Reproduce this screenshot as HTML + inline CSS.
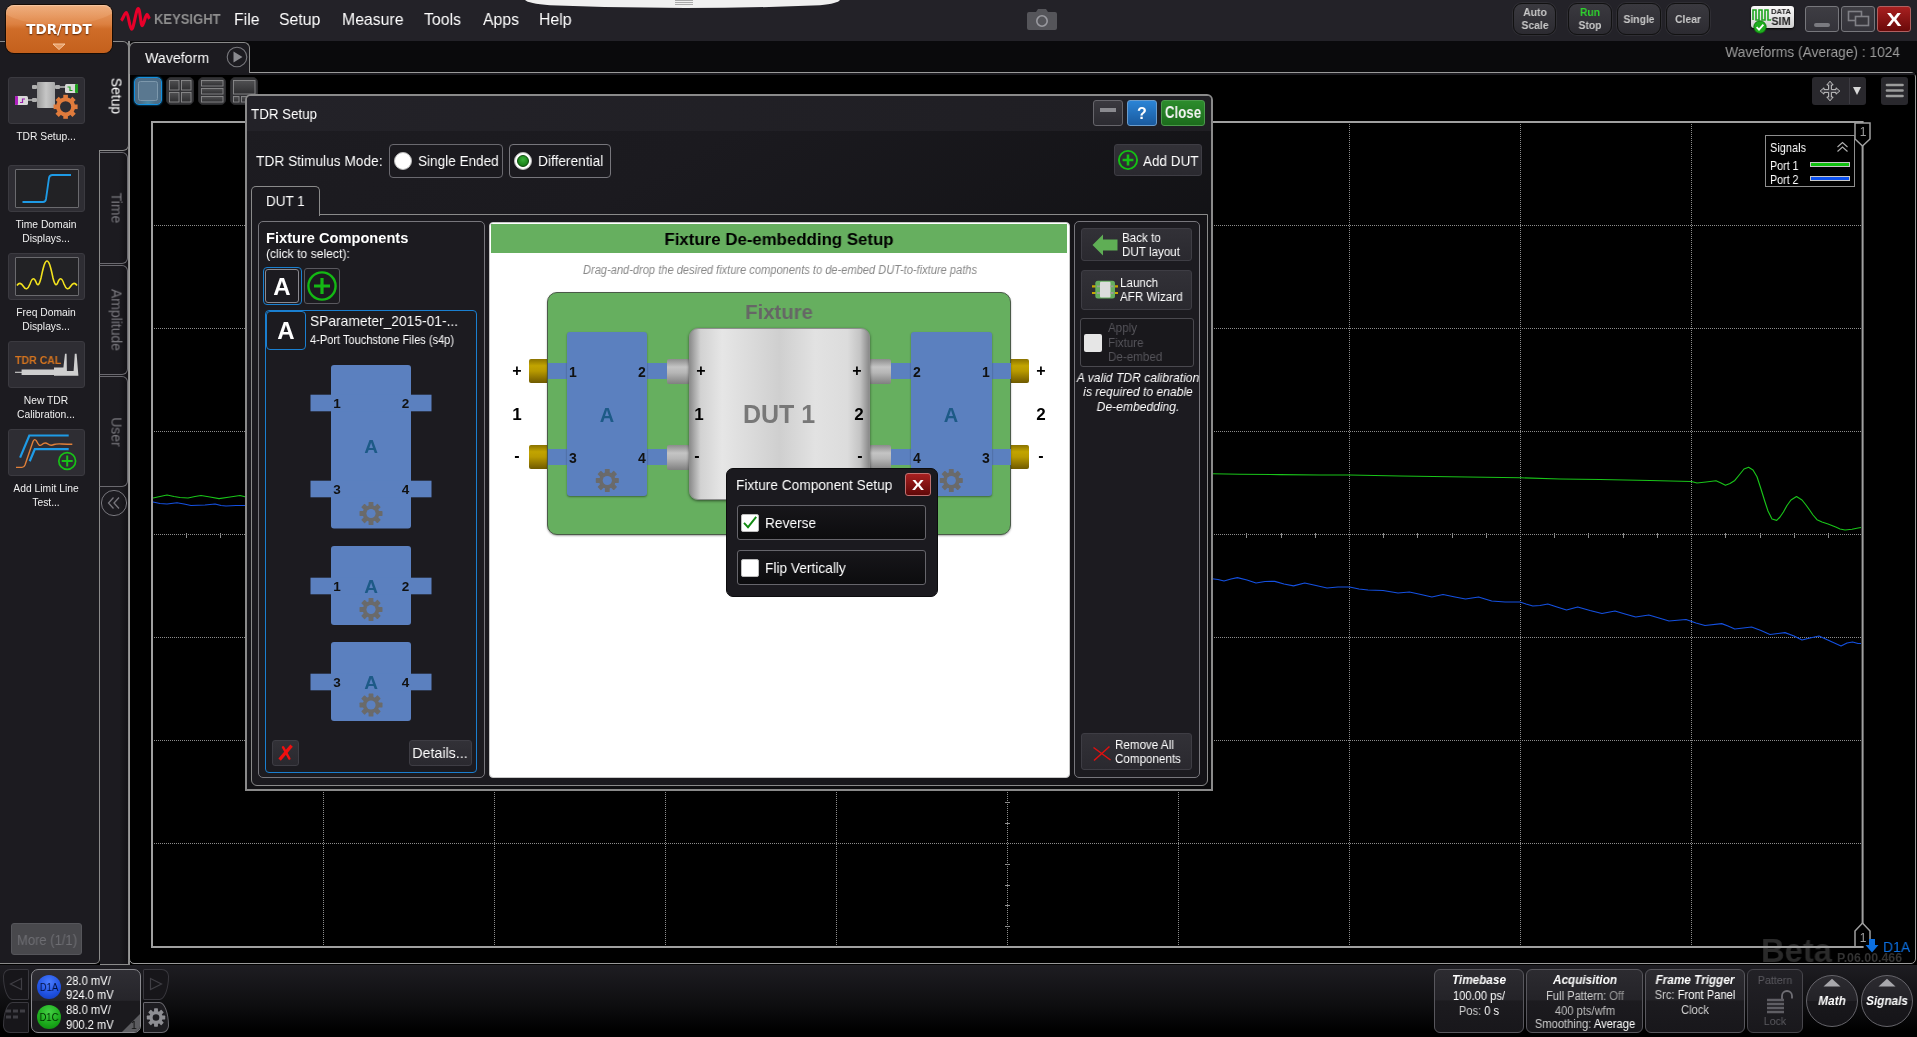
<!DOCTYPE html>
<html><head><meta charset="utf-8"><title>TDR Setup</title>
<style>
html,body{margin:0;padding:0;}
body{width:1917px;height:1037px;overflow:hidden;background:#000;position:relative;font-family:"Liberation Sans", sans-serif;}
div{box-sizing:border-box;}
.t{position:absolute;white-space:nowrap;will-change:transform;}
svg{position:absolute;overflow:visible;}
.btn{background:linear-gradient(#323137,#2a292f);border:1px solid #3e3d44;border-radius:3px;}
</style></head><body>
<div style="position:absolute;left:0px;top:0px;width:1917px;height:41px;background:#232228;"></div>
<div style="position:absolute;left:128px;top:41px;width:1789px;height:32px;background:#0a0a0c;"></div>
<div style="position:absolute;left:0px;top:41px;width:100px;height:923px;background:#1c1b20;border-right:1px solid #8a8a8a;border-top:1px solid #8a8a8a;border-bottom:1px solid #8a8a8a;border-bottom-right-radius:5px;"></div>
<div style="position:absolute;left:100px;top:41px;width:30px;height:924px;background:linear-gradient(90deg,#1c1b20 70%,#121115);border-right:2px solid #8a8a8a;border-bottom:1px solid #8a8a8a;"></div>
<div style="position:absolute;left:99px;top:41px;width:30px;height:110px;background:#1c1b20;border-right:1px solid #8a8a8a;border-top:1px solid #8a8a8a;border-bottom:1px solid #8a8a8a;border-left:0;border-radius:0 6px 6px 0;"></div>
<div style="position:absolute;left:99px;top:152px;width:29px;height:112px;background:linear-gradient(90deg,#1c1b20 70%,#131216);border:1px solid #6a696f;border-left:1px solid #8a8a8a;border-radius:0 6px 6px 0;"></div>
<div style="position:absolute;left:99px;top:265px;width:29px;height:110px;background:linear-gradient(90deg,#1c1b20 70%,#131216);border:1px solid #6a696f;border-left:1px solid #8a8a8a;border-radius:0 6px 6px 0;"></div>
<div style="position:absolute;left:99px;top:376px;width:29px;height:111px;background:linear-gradient(90deg,#1c1b20 70%,#131216);border:1px solid #6a696f;border-left:1px solid #8a8a8a;border-radius:0 6px 6px 0;"></div>
<div style="position:absolute;left:129px;top:72px;width:1786.5px;height:892px;background:#000;border:1px solid #9a9a9a;border-radius:0 5px 5px 5px;"></div>
<div style="position:absolute;left:129px;top:42px;width:121px;height:32px;background:#1c1b20;border:1px solid #8a8a8a;border-bottom:0;border-radius:6px 6px 0 0;"></div>
<div style="position:absolute;left:130px;top:72px;width:119px;height:2px;background:#1c1b20;"></div>
<div style="position:absolute;left:130px;top:73px;width:1785px;height:2px;background:#1b1a1f;"></div>
<div style="position:absolute;left:0px;top:965px;width:1917px;height:72px;background:linear-gradient(#1e1d22,#0e0e10 55%,#000 92%);"></div>
<div class="t" style="top:933.5px;font-size:33px;line-height:33px;color:#2a2a2a;transform-origin:0 50%;transform:scaleX(0.99);left:1761px;font-weight:bold;">Beta</div>
<div class="t" style="top:951.5px;font-size:12px;line-height:12px;color:#333;transform-origin:0 50%;transform:scaleX(1.03);left:1837px;font-weight:bold;">P.06.00.466</div>
<svg style="left:0;top:0" width="1917" height="1037" viewBox="0 0 1917 1037">
<line x1="323.1" y1="122" x2="323.1" y2="947" stroke="#8c8c8c" stroke-width="1" stroke-dasharray="1 1" shape-rendering="crispEdges"/>
<line x1="494.1" y1="122" x2="494.1" y2="947" stroke="#8c8c8c" stroke-width="1" stroke-dasharray="1 1" shape-rendering="crispEdges"/>
<line x1="665.2" y1="122" x2="665.2" y2="947" stroke="#8c8c8c" stroke-width="1" stroke-dasharray="1 1" shape-rendering="crispEdges"/>
<line x1="836.2" y1="122" x2="836.2" y2="947" stroke="#8c8c8c" stroke-width="1" stroke-dasharray="1 1" shape-rendering="crispEdges"/>
<line x1="1007.3" y1="122" x2="1007.3" y2="947" stroke="#8c8c8c" stroke-width="1" stroke-dasharray="1 1" shape-rendering="crispEdges"/>
<line x1="1178.4" y1="122" x2="1178.4" y2="947" stroke="#8c8c8c" stroke-width="1" stroke-dasharray="1 1" shape-rendering="crispEdges"/>
<line x1="1349.4" y1="122" x2="1349.4" y2="947" stroke="#8c8c8c" stroke-width="1" stroke-dasharray="1 1" shape-rendering="crispEdges"/>
<line x1="1520.5" y1="122" x2="1520.5" y2="947" stroke="#8c8c8c" stroke-width="1" stroke-dasharray="1 1" shape-rendering="crispEdges"/>
<line x1="1691.5" y1="122" x2="1691.5" y2="947" stroke="#8c8c8c" stroke-width="1" stroke-dasharray="1 1" shape-rendering="crispEdges"/>
<line x1="152" y1="225.1" x2="1862.6" y2="225.1" stroke="#8c8c8c" stroke-width="1" stroke-dasharray="1 1" shape-rendering="crispEdges"/>
<line x1="152" y1="328.2" x2="1862.6" y2="328.2" stroke="#8c8c8c" stroke-width="1" stroke-dasharray="1 1" shape-rendering="crispEdges"/>
<line x1="152" y1="431.4" x2="1862.6" y2="431.4" stroke="#8c8c8c" stroke-width="1" stroke-dasharray="1 1" shape-rendering="crispEdges"/>
<line x1="152" y1="534.5" x2="1862.6" y2="534.5" stroke="#8c8c8c" stroke-width="1" stroke-dasharray="1 1" shape-rendering="crispEdges"/>
<line x1="152" y1="637.6" x2="1862.6" y2="637.6" stroke="#8c8c8c" stroke-width="1" stroke-dasharray="1 1" shape-rendering="crispEdges"/>
<line x1="152" y1="740.8" x2="1862.6" y2="740.8" stroke="#8c8c8c" stroke-width="1" stroke-dasharray="1 1" shape-rendering="crispEdges"/>
<line x1="152" y1="843.9" x2="1862.6" y2="843.9" stroke="#8c8c8c" stroke-width="1" stroke-dasharray="1 1" shape-rendering="crispEdges"/>
<line x1="186.2" y1="532.5" x2="186.2" y2="537.5" stroke="#8c8c8c" stroke-width="1" shape-rendering="crispEdges"/>
<line x1="220.4" y1="532.5" x2="220.4" y2="537.5" stroke="#8c8c8c" stroke-width="1" shape-rendering="crispEdges"/>
<line x1="254.6" y1="532.5" x2="254.6" y2="537.5" stroke="#8c8c8c" stroke-width="1" shape-rendering="crispEdges"/>
<line x1="288.8" y1="532.5" x2="288.8" y2="537.5" stroke="#8c8c8c" stroke-width="1" shape-rendering="crispEdges"/>
<line x1="357.3" y1="532.5" x2="357.3" y2="537.5" stroke="#8c8c8c" stroke-width="1" shape-rendering="crispEdges"/>
<line x1="391.5" y1="532.5" x2="391.5" y2="537.5" stroke="#8c8c8c" stroke-width="1" shape-rendering="crispEdges"/>
<line x1="425.7" y1="532.5" x2="425.7" y2="537.5" stroke="#8c8c8c" stroke-width="1" shape-rendering="crispEdges"/>
<line x1="459.9" y1="532.5" x2="459.9" y2="537.5" stroke="#8c8c8c" stroke-width="1" shape-rendering="crispEdges"/>
<line x1="528.3" y1="532.5" x2="528.3" y2="537.5" stroke="#8c8c8c" stroke-width="1" shape-rendering="crispEdges"/>
<line x1="562.5" y1="532.5" x2="562.5" y2="537.5" stroke="#8c8c8c" stroke-width="1" shape-rendering="crispEdges"/>
<line x1="596.8" y1="532.5" x2="596.8" y2="537.5" stroke="#8c8c8c" stroke-width="1" shape-rendering="crispEdges"/>
<line x1="631.0" y1="532.5" x2="631.0" y2="537.5" stroke="#8c8c8c" stroke-width="1" shape-rendering="crispEdges"/>
<line x1="699.4" y1="532.5" x2="699.4" y2="537.5" stroke="#8c8c8c" stroke-width="1" shape-rendering="crispEdges"/>
<line x1="733.6" y1="532.5" x2="733.6" y2="537.5" stroke="#8c8c8c" stroke-width="1" shape-rendering="crispEdges"/>
<line x1="767.8" y1="532.5" x2="767.8" y2="537.5" stroke="#8c8c8c" stroke-width="1" shape-rendering="crispEdges"/>
<line x1="802.0" y1="532.5" x2="802.0" y2="537.5" stroke="#8c8c8c" stroke-width="1" shape-rendering="crispEdges"/>
<line x1="870.5" y1="532.5" x2="870.5" y2="537.5" stroke="#8c8c8c" stroke-width="1" shape-rendering="crispEdges"/>
<line x1="904.7" y1="532.5" x2="904.7" y2="537.5" stroke="#8c8c8c" stroke-width="1" shape-rendering="crispEdges"/>
<line x1="938.9" y1="532.5" x2="938.9" y2="537.5" stroke="#8c8c8c" stroke-width="1" shape-rendering="crispEdges"/>
<line x1="973.1" y1="532.5" x2="973.1" y2="537.5" stroke="#8c8c8c" stroke-width="1" shape-rendering="crispEdges"/>
<line x1="1041.5" y1="532.5" x2="1041.5" y2="537.5" stroke="#8c8c8c" stroke-width="1" shape-rendering="crispEdges"/>
<line x1="1075.7" y1="532.5" x2="1075.7" y2="537.5" stroke="#8c8c8c" stroke-width="1" shape-rendering="crispEdges"/>
<line x1="1109.9" y1="532.5" x2="1109.9" y2="537.5" stroke="#8c8c8c" stroke-width="1" shape-rendering="crispEdges"/>
<line x1="1144.1" y1="532.5" x2="1144.1" y2="537.5" stroke="#8c8c8c" stroke-width="1" shape-rendering="crispEdges"/>
<line x1="1212.6" y1="532.5" x2="1212.6" y2="537.5" stroke="#8c8c8c" stroke-width="1" shape-rendering="crispEdges"/>
<line x1="1246.8" y1="532.5" x2="1246.8" y2="537.5" stroke="#8c8c8c" stroke-width="1" shape-rendering="crispEdges"/>
<line x1="1281.0" y1="532.5" x2="1281.0" y2="537.5" stroke="#8c8c8c" stroke-width="1" shape-rendering="crispEdges"/>
<line x1="1315.2" y1="532.5" x2="1315.2" y2="537.5" stroke="#8c8c8c" stroke-width="1" shape-rendering="crispEdges"/>
<line x1="1383.6" y1="532.5" x2="1383.6" y2="537.5" stroke="#8c8c8c" stroke-width="1" shape-rendering="crispEdges"/>
<line x1="1417.8" y1="532.5" x2="1417.8" y2="537.5" stroke="#8c8c8c" stroke-width="1" shape-rendering="crispEdges"/>
<line x1="1452.1" y1="532.5" x2="1452.1" y2="537.5" stroke="#8c8c8c" stroke-width="1" shape-rendering="crispEdges"/>
<line x1="1486.3" y1="532.5" x2="1486.3" y2="537.5" stroke="#8c8c8c" stroke-width="1" shape-rendering="crispEdges"/>
<line x1="1554.7" y1="532.5" x2="1554.7" y2="537.5" stroke="#8c8c8c" stroke-width="1" shape-rendering="crispEdges"/>
<line x1="1588.9" y1="532.5" x2="1588.9" y2="537.5" stroke="#8c8c8c" stroke-width="1" shape-rendering="crispEdges"/>
<line x1="1623.1" y1="532.5" x2="1623.1" y2="537.5" stroke="#8c8c8c" stroke-width="1" shape-rendering="crispEdges"/>
<line x1="1657.3" y1="532.5" x2="1657.3" y2="537.5" stroke="#8c8c8c" stroke-width="1" shape-rendering="crispEdges"/>
<line x1="1725.8" y1="532.5" x2="1725.8" y2="537.5" stroke="#8c8c8c" stroke-width="1" shape-rendering="crispEdges"/>
<line x1="1760.0" y1="532.5" x2="1760.0" y2="537.5" stroke="#8c8c8c" stroke-width="1" shape-rendering="crispEdges"/>
<line x1="1794.2" y1="532.5" x2="1794.2" y2="537.5" stroke="#8c8c8c" stroke-width="1" shape-rendering="crispEdges"/>
<line x1="1828.4" y1="532.5" x2="1828.4" y2="537.5" stroke="#8c8c8c" stroke-width="1" shape-rendering="crispEdges"/>
<line x1="1005.3" y1="142.6" x2="1010.3" y2="142.6" stroke="#8c8c8c" stroke-width="1" shape-rendering="crispEdges"/>
<line x1="1005.3" y1="163.2" x2="1010.3" y2="163.2" stroke="#8c8c8c" stroke-width="1" shape-rendering="crispEdges"/>
<line x1="1005.3" y1="183.9" x2="1010.3" y2="183.9" stroke="#8c8c8c" stroke-width="1" shape-rendering="crispEdges"/>
<line x1="1005.3" y1="204.5" x2="1010.3" y2="204.5" stroke="#8c8c8c" stroke-width="1" shape-rendering="crispEdges"/>
<line x1="1005.3" y1="245.8" x2="1010.3" y2="245.8" stroke="#8c8c8c" stroke-width="1" shape-rendering="crispEdges"/>
<line x1="1005.3" y1="266.4" x2="1010.3" y2="266.4" stroke="#8c8c8c" stroke-width="1" shape-rendering="crispEdges"/>
<line x1="1005.3" y1="287.0" x2="1010.3" y2="287.0" stroke="#8c8c8c" stroke-width="1" shape-rendering="crispEdges"/>
<line x1="1005.3" y1="307.6" x2="1010.3" y2="307.6" stroke="#8c8c8c" stroke-width="1" shape-rendering="crispEdges"/>
<line x1="1005.3" y1="348.9" x2="1010.3" y2="348.9" stroke="#8c8c8c" stroke-width="1" shape-rendering="crispEdges"/>
<line x1="1005.3" y1="369.5" x2="1010.3" y2="369.5" stroke="#8c8c8c" stroke-width="1" shape-rendering="crispEdges"/>
<line x1="1005.3" y1="390.1" x2="1010.3" y2="390.1" stroke="#8c8c8c" stroke-width="1" shape-rendering="crispEdges"/>
<line x1="1005.3" y1="410.8" x2="1010.3" y2="410.8" stroke="#8c8c8c" stroke-width="1" shape-rendering="crispEdges"/>
<line x1="1005.3" y1="452.0" x2="1010.3" y2="452.0" stroke="#8c8c8c" stroke-width="1" shape-rendering="crispEdges"/>
<line x1="1005.3" y1="472.6" x2="1010.3" y2="472.6" stroke="#8c8c8c" stroke-width="1" shape-rendering="crispEdges"/>
<line x1="1005.3" y1="493.2" x2="1010.3" y2="493.2" stroke="#8c8c8c" stroke-width="1" shape-rendering="crispEdges"/>
<line x1="1005.3" y1="513.9" x2="1010.3" y2="513.9" stroke="#8c8c8c" stroke-width="1" shape-rendering="crispEdges"/>
<line x1="1005.3" y1="555.1" x2="1010.3" y2="555.1" stroke="#8c8c8c" stroke-width="1" shape-rendering="crispEdges"/>
<line x1="1005.3" y1="575.8" x2="1010.3" y2="575.8" stroke="#8c8c8c" stroke-width="1" shape-rendering="crispEdges"/>
<line x1="1005.3" y1="596.4" x2="1010.3" y2="596.4" stroke="#8c8c8c" stroke-width="1" shape-rendering="crispEdges"/>
<line x1="1005.3" y1="617.0" x2="1010.3" y2="617.0" stroke="#8c8c8c" stroke-width="1" shape-rendering="crispEdges"/>
<line x1="1005.3" y1="658.2" x2="1010.3" y2="658.2" stroke="#8c8c8c" stroke-width="1" shape-rendering="crispEdges"/>
<line x1="1005.3" y1="678.9" x2="1010.3" y2="678.9" stroke="#8c8c8c" stroke-width="1" shape-rendering="crispEdges"/>
<line x1="1005.3" y1="699.5" x2="1010.3" y2="699.5" stroke="#8c8c8c" stroke-width="1" shape-rendering="crispEdges"/>
<line x1="1005.3" y1="720.1" x2="1010.3" y2="720.1" stroke="#8c8c8c" stroke-width="1" shape-rendering="crispEdges"/>
<line x1="1005.3" y1="761.4" x2="1010.3" y2="761.4" stroke="#8c8c8c" stroke-width="1" shape-rendering="crispEdges"/>
<line x1="1005.3" y1="782.0" x2="1010.3" y2="782.0" stroke="#8c8c8c" stroke-width="1" shape-rendering="crispEdges"/>
<line x1="1005.3" y1="802.6" x2="1010.3" y2="802.6" stroke="#8c8c8c" stroke-width="1" shape-rendering="crispEdges"/>
<line x1="1005.3" y1="823.2" x2="1010.3" y2="823.2" stroke="#8c8c8c" stroke-width="1" shape-rendering="crispEdges"/>
<line x1="1005.3" y1="864.5" x2="1010.3" y2="864.5" stroke="#8c8c8c" stroke-width="1" shape-rendering="crispEdges"/>
<line x1="1005.3" y1="885.1" x2="1010.3" y2="885.1" stroke="#8c8c8c" stroke-width="1" shape-rendering="crispEdges"/>
<line x1="1005.3" y1="905.8" x2="1010.3" y2="905.8" stroke="#8c8c8c" stroke-width="1" shape-rendering="crispEdges"/>
<line x1="1005.3" y1="926.4" x2="1010.3" y2="926.4" stroke="#8c8c8c" stroke-width="1" shape-rendering="crispEdges"/>
<rect x="152" y="122" width="1710.6" height="825" fill="none" stroke="#a0a0a0" stroke-width="2"/>
<polyline points="153.0,498.0 160.0,496.5 167.0,495.0 174.0,496.5 180.0,497.5 188.0,498.0 195.0,496.5 201.0,495.5 210.0,497.0 219.0,498.6 230.0,497.0 240.0,495.5 246.0,497.0" fill="none" stroke="#19c419" stroke-width="1.15" stroke-linejoin="round"/>
<polyline points="153.0,502.0 160.0,503.5 167.0,504.0 177.0,502.8 184.0,504.0 191.0,505.5 205.0,505.0 215.0,504.0 221.0,505.5 226.0,506.0 236.0,505.5 246.0,505.5" fill="none" stroke="#1450e0" stroke-width="1.15" stroke-linejoin="round"/>
<polyline points="1212.0,473.7 1240.0,474.3 1280.0,474.6 1320.0,475.0 1349.6,475.0 1400.0,476.0 1450.0,476.8 1520.5,477.8 1560.0,479.0 1600.0,479.5 1650.0,480.5 1691.4,481.5 1697.0,483.0 1706.0,482.0 1716.0,480.8 1721.0,483.0 1725.4,485.3 1730.0,483.5 1734.8,480.4 1740.0,474.0 1744.0,469.0 1748.6,467.3 1753.0,470.0 1757.0,476.7 1761.0,489.0 1764.7,501.0 1768.0,511.0 1772.0,519.0 1776.7,520.4 1780.0,517.0 1783.4,512.0 1787.0,505.5 1791.0,500.0 1796.5,496.5 1802.0,500.0 1806.0,505.0 1809.6,510.0 1813.0,515.0 1817.0,519.7 1822.0,522.0 1828.0,524.0 1835.7,527.0 1840.0,529.0 1845.0,530.0 1852.0,529.3 1858.0,528.0 1861.0,527.5" fill="none" stroke="#19c419" stroke-width="1.15" stroke-linejoin="round"/>
<polyline points="1212.0,578.8 1218.0,579.5 1224.0,581.0 1231.0,579.0 1237.4,577.6 1247.0,580.0 1256.0,583.0 1265.0,581.5 1274.8,581.4 1284.0,584.0 1293.5,585.9 1304.7,583.0 1316.0,585.5 1327.0,588.0 1338.0,587.0 1349.6,587.0 1359.0,589.0 1368.0,590.0 1383.0,590.5 1398.0,593.0 1409.4,592.0 1421.0,594.5 1431.9,597.0 1443.0,594.5 1455.0,597.0 1465.5,599.0 1478.6,597.0 1485.0,599.0 1491.7,601.0 1505.0,602.0 1520.0,602.0 1526.0,604.0 1532.8,606.0 1540.0,605.5 1547.8,604.0 1557.0,607.0 1566.5,610.0 1577.7,607.0 1590.0,610.5 1602.0,613.5 1615.0,611.0 1625.0,614.0 1635.7,617.0 1648.8,615.0 1659.0,618.0 1669.0,621.0 1686.0,619.5 1696.0,623.0 1705.0,625.5 1721.7,623.6 1728.0,626.0 1734.8,629.0 1751.6,627.0 1761.0,630.5 1770.0,634.5 1785.0,632.6 1794.0,636.0 1802.0,640.0 1810.0,638.0 1819.0,636.0 1830.0,641.0 1841.0,646.0 1847.0,643.0 1852.6,642.0 1858.0,643.5 1861.0,643.5" fill="none" stroke="#1450e0" stroke-width="1.15" stroke-linejoin="round"/>
<path d="M1855,123 L1870,123 L1870,139 L1862.5,146 L1855,139 Z" fill="#000" stroke="#a0a0a0" stroke-width="1.5"/>
<path d="M1855,946 L1855,931 L1862.5,923 L1870,931 L1870,946" fill="#000" stroke="#a0a0a0" stroke-width="1.5"/>
</svg>
<div class="t" style="top:126.0px;font-size:12px;line-height:12px;color:#a0a0a0;transform-origin:50% 50%;transform:translateX(-50%) scaleX(1);left:1862.5px;">1</div>
<div class="t" style="top:932.0px;font-size:12px;line-height:12px;color:#a0a0a0;transform-origin:50% 50%;transform:translateX(-50%) scaleX(1);left:1862.5px;">1</div>
<svg style="left:520px;top:0" width="330" height="10" viewBox="0 0 330 10"><path d="M5,0 L320,0 Q318,3.5 300,5.2 Q165,11 30,5.2 Q8,3.5 5,0 Z" fill="#f0f0f0"/><path d="M155,0.5h18M155,2.5h18M155,4.5h18" stroke="#aaa" stroke-width="1"/></svg>
<div style="position:absolute;left:6px;top:5px;width:106px;height:48px;background:linear-gradient(#e9a06c 0%,#dc8040 40%,#cf6c28 50%,#c4601c 100%);border-radius:8px;box-shadow:0 0 0 1px #160b03, inset 0 1px 1px rgba(255,225,200,.55);overflow:hidden;"><div style="position:absolute;left:-12px;top:-30px;width:128px;height:50px;border-radius:50%;background:linear-gradient(rgba(255,215,180,.55),rgba(255,190,140,.12));"></div></div>
<div class="t" style="top:23.4px;font-size:13.5px;line-height:13.5px;color:#fff;transform-origin:50% 50%;transform:translateX(-50%) scaleX(1.0);left:59px;font-weight:bold;font-family:&quot;DejaVu Sans&quot;,&quot;Liberation Sans&quot;,sans-serif;text-shadow:0 1px 1.5px rgba(80,30,0,.9);">TDR/TDT</div>
<svg style="left:52px;top:43px" width="14" height="8" viewBox="0 0 14 8"><path d="M1,1 L13,1 L7,6.5 Z" fill="#e89a60" stroke="#f6c8a0" stroke-width="1"/></svg>
<svg style="left:0px;top:0px" width="160" height="40" viewBox="0 0 160 40"><path d="M121.2,20.6 C123,19 124.6,12.6 126.4,12.6 C128.4,12.6 129.6,29.2 131.6,29.2 C133.8,29.2 136,8.6 138.2,8.6 C140.2,8.6 140.6,25.6 142.2,25.6 C143.8,25.6 145.4,14.4 147,14.4 C148,14.4 148.6,17.6 149.4,18.8" fill="none" stroke="#e8002a" stroke-width="3.1" stroke-linejoin="round" stroke-linecap="butt"/></svg>
<div class="t" style="top:12.0px;font-size:14px;line-height:14px;color:#8e8e8e;transform-origin:0 50%;transform:scaleX(0.93);left:154px;font-weight:bold;">KEYSIGHT</div>
<div class="t" style="top:10.7px;font-size:17px;line-height:17px;color:#fff;transform-origin:0 50%;transform:scaleX(0.93);left:234px;">File</div>
<div class="t" style="top:10.7px;font-size:17px;line-height:17px;color:#fff;transform-origin:0 50%;transform:scaleX(0.93);left:279px;">Setup</div>
<div class="t" style="top:10.7px;font-size:17px;line-height:17px;color:#fff;transform-origin:0 50%;transform:scaleX(0.93);left:342px;">Measure</div>
<div class="t" style="top:10.7px;font-size:17px;line-height:17px;color:#fff;transform-origin:0 50%;transform:scaleX(0.93);left:424px;">Tools</div>
<div class="t" style="top:10.7px;font-size:17px;line-height:17px;color:#fff;transform-origin:0 50%;transform:scaleX(0.93);left:483px;">Apps</div>
<div class="t" style="top:10.7px;font-size:17px;line-height:17px;color:#fff;transform-origin:0 50%;transform:scaleX(0.93);left:539px;">Help</div>
<svg style="left:1026px;top:6px" width="32" height="26" viewBox="0 0 32 26"><path d="M3,6 h7 l2,-3 h8 l2,3 h7 a2,2 0 0 1 2,2 v14 a2,2 0 0 1 -2,2 h-26 a2,2 0 0 1 -2,-2 v-14 a2,2 0 0 1 2,-2 z" fill="#55555a"/><circle cx="16" cy="15" r="5.2" fill="none" stroke="#9a9aa0" stroke-width="1.6"/></svg>
<div style="position:absolute;left:1513px;top:3px;width:43px;height:32px;background:linear-gradient(#3a393f,#2c2b31);border:1px solid #111;border-radius:9px;box-shadow:0 0 0 1px #2f2e34;"></div>
<div class="t" style="top:6.8px;font-size:11.5px;line-height:11.5px;color:#c8c8c8;transform-origin:50% 50%;transform:translateX(-50%) scaleX(0.9);left:1534.5px;font-weight:bold;">Auto</div>
<div class="t" style="top:19.8px;font-size:11.5px;line-height:11.5px;color:#c8c8c8;transform-origin:50% 50%;transform:translateX(-50%) scaleX(0.9);left:1534.5px;font-weight:bold;">Scale</div>
<div style="position:absolute;left:1568px;top:3px;width:44px;height:32px;background:linear-gradient(#3a393f,#2c2b31);border:1px solid #111;border-radius:9px;box-shadow:0 0 0 1px #2f2e34;"></div>
<div class="t" style="top:6.8px;font-size:11.5px;line-height:11.5px;color:#2fd02f;transform-origin:50% 50%;transform:translateX(-50%) scaleX(0.9);left:1590.0px;font-weight:bold;">Run</div>
<div class="t" style="top:19.8px;font-size:11.5px;line-height:11.5px;color:#c8c8c8;transform-origin:50% 50%;transform:translateX(-50%) scaleX(0.9);left:1590.0px;font-weight:bold;">Stop</div>
<div style="position:absolute;left:1617px;top:3px;width:44px;height:32px;background:linear-gradient(#3a393f,#2c2b31);border:1px solid #111;border-radius:9px;box-shadow:0 0 0 1px #2f2e34;"></div>
<div class="t" style="top:13.8px;font-size:11.5px;line-height:11.5px;color:#c8c8c8;transform-origin:50% 50%;transform:translateX(-50%) scaleX(0.9);left:1639.0px;font-weight:bold;">Single</div>
<div style="position:absolute;left:1666px;top:3px;width:44px;height:32px;background:linear-gradient(#3a393f,#2c2b31);border:1px solid #111;border-radius:9px;box-shadow:0 0 0 1px #2f2e34;"></div>
<div class="t" style="top:13.8px;font-size:11.5px;line-height:11.5px;color:#c8c8c8;transform-origin:50% 50%;transform:translateX(-50%) scaleX(0.9);left:1688.0px;font-weight:bold;">Clear</div>
<div style="position:absolute;left:1751px;top:6px;width:43px;height:22px;background:linear-gradient(#fafafa,#d0d0d0);border-radius:3px;box-shadow:0 1px 2px #000;"></div>
<svg style="left:1752px;top:7px" width="22" height="16" viewBox="0 0 22 16"><path d="M1,13 V3 H4 V13 H7 V3 H10 V13 H13 V3 H16 V13 H19" fill="none" stroke="#1fa51f" stroke-width="1.6"/></svg>
<div class="t" style="top:8.0px;font-size:8px;line-height:8px;color:#222;transform-origin:50% 50%;transform:translateX(-50%) scaleX(0.95);left:1781px;font-weight:bold;">DATA</div>
<div class="t" style="top:16.0px;font-size:11px;line-height:11px;color:#222;transform-origin:50% 50%;transform:translateX(-50%) scaleX(0.98);left:1781px;font-weight:bold;">SIM</div>
<svg style="left:1753px;top:20px" width="14" height="14" viewBox="0 0 14 14"><circle cx="7" cy="7" r="6.2" fill="#1fae1f" stroke="#0d6d0d" stroke-width="0.8"/><path d="M3.6,7.2 L6,9.6 L10.4,4.6" fill="none" stroke="#fff" stroke-width="1.8"/></svg>
<div style="position:absolute;left:1805px;top:6px;width:34px;height:26px;background:linear-gradient(#3e3d43,#34333a);border:1px solid #77777c;border-radius:3px;"></div>
<div style="position:absolute;left:1814px;top:23px;width:16px;height:4px;background:#7a7a80;border-radius:2px;"></div>
<div style="position:absolute;left:1841px;top:6px;width:34px;height:26px;background:linear-gradient(#3e3d43,#34333a);border:1px solid #77777c;border-radius:3px;"></div>
<svg style="left:1847px;top:10px" width="24" height="18" viewBox="0 0 24 18"><rect x="1.5" y="1.5" width="13" height="9" fill="none" stroke="#808086" stroke-width="1.6"/><rect x="8.5" y="6.5" width="13" height="9" fill="#38373d" stroke="#808086" stroke-width="1.6"/></svg>
<div style="position:absolute;left:1877px;top:6px;width:34px;height:26px;background:linear-gradient(#a82020,#6a0909);border:1px solid #b06060;border-radius:3px;"></div>
<div class="t" style="top:10.5px;font-size:18px;line-height:18px;color:#fff;transform-origin:50% 50%;transform:translateX(-50%) scaleX(1.25);left:1894px;font-weight:bold;">X</div>
<div class="t" style="top:44.3px;font-size:15px;line-height:15px;color:#9c9c9c;transform-origin:100% 50%;transform:translateX(-100%) scaleX(0.915);left:1900px;">Waveforms (Average) : 1024</div>
<div class="t" style="top:49.9px;font-size:15.5px;line-height:15.5px;color:#fff;transform-origin:0 50%;transform:scaleX(0.915);left:145px;">Waveform</div>
<svg style="left:226px;top:46.2px" width="22" height="22" viewBox="0 0 22 22"><circle cx="11" cy="11" r="9.8" fill="none" stroke="#77777c" stroke-width="1.1"/><path d="M7.5,5.5 L16.5,11 L7.5,16.5 Z" fill="#8a8a8f"/></svg>
<div class="t" style="left:116.8px;top:96px;font-size:15px;line-height:15px;color:#fff;transform:translate(-50%,-50%) rotate(90deg) scaleX(0.93);">Setup</div>
<div class="t" style="left:116.8px;top:207.5px;font-size:15px;line-height:15px;color:#77767c;transform:translate(-50%,-50%) rotate(90deg) scaleX(0.93);">Time</div>
<div class="t" style="left:116.8px;top:320px;font-size:15px;line-height:15px;color:#77767c;transform:translate(-50%,-50%) rotate(90deg) scaleX(0.93);">Amplitude</div>
<div class="t" style="left:116.8px;top:432px;font-size:15px;line-height:15px;color:#77767c;transform:translate(-50%,-50%) rotate(90deg) scaleX(0.93);">User</div>
<svg style="left:100px;top:489px" width="28" height="28" viewBox="0 0 28 28"><circle cx="14" cy="14" r="12.6" fill="none" stroke="#77767c" stroke-width="1"/><path d="M13.5,8.5 L8.5,14 L13.5,19.5 M19,8.5 L14,14 L19,19.5" fill="none" stroke="#77767c" stroke-width="1.3"/></svg>
<div style="position:absolute;left:8px;top:77px;width:77px;height:47px;background:#2e2d33;border:1px solid #3b3a40;border-radius:3px;"></div>
<svg style="left:8px;top:77px" width="77" height="47" viewBox="0 0 77 47">
<defs><linearGradient id="gb" x1="0" x2="1"><stop offset="0" stop-color="#9a9a9a"/><stop offset=".5" stop-color="#c6c6c6"/><stop offset="1" stop-color="#a8a8a8"/></linearGradient></defs>
<rect x="24" y="8" width="5" height="4" rx="1" fill="#b0b0b0"/><rect x="24" y="21" width="5" height="4" rx="1" fill="#b0b0b0"/>
<rect x="47" y="8" width="5" height="4" rx="1" fill="#b0b0b0"/><rect x="14" y="22" width="10" height="2" fill="#9a9a9a"/><rect x="52" y="9" width="8" height="2" fill="#9a9a9a"/>
<rect x="29" y="5" width="18" height="26" rx="1" fill="url(#gb)"/>
<rect x="7" y="19" width="13" height="9" rx="1.5" fill="#d8d8d8"/><rect x="7" y="19" width="3" height="9" rx="1" fill="#b020c0"/>
<path d="M12,25.5 h2.5 v-3.5 h2.5" fill="none" stroke="#9a20b0" stroke-width="1.2"/>
<rect x="57" y="7" width="13" height="9" rx="1.5" fill="#d8d8d8"/><rect x="67" y="7" width="3" height="9" rx="1" fill="#20a020"/>
<path d="M59.5,10 h2.5 v3.5 h2.5" fill="none" stroke="#20a020" stroke-width="1.2"/>
<g transform="translate(57.6,29.8)"><circle r="7.6" fill="none" stroke="#e07b3c" stroke-width="4"/>
<g fill="#e07b3c"><rect x="-2.3" y="-12" width="4.6" height="5" transform="rotate(0)"/><rect x="-2.3" y="-12" width="4.6" height="5" transform="rotate(45)"/><rect x="-2.3" y="-12" width="4.6" height="5" transform="rotate(90)"/><rect x="-2.3" y="-12" width="4.6" height="5" transform="rotate(135)"/><rect x="-2.3" y="-12" width="4.6" height="5" transform="rotate(180)"/><rect x="-2.3" y="-12" width="4.6" height="5" transform="rotate(225)"/><rect x="-2.3" y="-12" width="4.6" height="5" transform="rotate(270)"/><rect x="-2.3" y="-12" width="4.6" height="5" transform="rotate(315)"/></g></g>
</svg>
<div class="t" style="top:131.7px;font-size:10.3px;line-height:10.3px;color:#f0f0f0;transform-origin:50% 50%;transform:translateX(-50%) scaleX(1.0);left:46px;">TDR Setup...</div>
<div style="position:absolute;left:8px;top:165px;width:77px;height:47px;background:#2e2d33;border:1px solid #3b3a40;border-radius:3px;"></div>
<div style="position:absolute;left:15px;top:169px;width:64px;height:39px;background:#222225;border:1px solid #6a6a6e;border-radius:1px;"></div>
<svg style="left:15px;top:169px" width="64" height="39" viewBox="0 0 64 39"><path d="M7.5,33 H28 Q30.5,33 31,30 L34,9 Q34.5,6 37.5,6 H56" fill="none" stroke="#1e9be6" stroke-width="1.8"/></svg>
<div class="t" style="top:220.0px;font-size:10.3px;line-height:10.3px;color:#f0f0f0;transform-origin:50% 50%;transform:translateX(-50%) scaleX(1.0);left:46px;">Time Domain</div>
<div class="t" style="top:234.0px;font-size:10.3px;line-height:10.3px;color:#f0f0f0;transform-origin:50% 50%;transform:translateX(-50%) scaleX(1.0);left:46px;">Displays...</div>
<div style="position:absolute;left:8px;top:253px;width:77px;height:47px;background:#2e2d33;border:1px solid #3b3a40;border-radius:3px;"></div>
<div style="position:absolute;left:15px;top:257px;width:64px;height:39px;background:#222225;border:1px solid #6a6a6e;border-radius:1px;"></div>
<svg style="left:15px;top:257px" width="64" height="39" viewBox="0 0 64 39"><path d="M2,28.5 C4,25.5 6,25.5 8.5,29.5 C11,33.5 13,32 15,27 C17,21 19,20 21,25 C22.5,29 24,29 26,21 C28.5,9 30,4 32,4 C34,4 35.5,9 38,21 C40,29 41.5,29 43,25 C45,20 47,21 49,27 C51,32 53,33.5 55.5,29.5 C58,25.5 60,25.5 62,28.5" fill="none" stroke="#f2e21e" stroke-width="1.6"/></svg>
<div class="t" style="top:307.7px;font-size:10.3px;line-height:10.3px;color:#f0f0f0;transform-origin:50% 50%;transform:translateX(-50%) scaleX(1.0);left:46px;">Freq Domain</div>
<div class="t" style="top:321.7px;font-size:10.3px;line-height:10.3px;color:#f0f0f0;transform-origin:50% 50%;transform:translateX(-50%) scaleX(1.0);left:46px;">Displays...</div>
<div style="position:absolute;left:8px;top:341px;width:77px;height:47px;background:#2e2d33;border:1px solid #3b3a40;border-radius:3px;"></div>
<div class="t" style="top:354.5px;font-size:11px;line-height:11px;color:#d4741f;transform-origin:0 50%;transform:scaleX(0.96);left:14.5px;font-weight:bold;">TDR CAL</div>
<svg style="left:8px;top:341px" width="77" height="47" viewBox="0 0 77 47"><path d="M7,31.3 H14" stroke="#cfcfcf" stroke-width="1.1"/><path d="M13.6,28.5 H46 V26.5 H55.4 L57,12.8 H58.6 L58.9,30 H65.6 L66.8,12.8 H68.6 L70.4,34.8 H46 V33.9 H13.6 Z" fill="#cfcfcf"/></svg>
<div class="t" style="top:396.0px;font-size:10.3px;line-height:10.3px;color:#f0f0f0;transform-origin:50% 50%;transform:translateX(-50%) scaleX(1.0);left:46px;">New TDR</div>
<div class="t" style="top:410.0px;font-size:10.3px;line-height:10.3px;color:#f0f0f0;transform-origin:50% 50%;transform:translateX(-50%) scaleX(1.0);left:46px;">Calibration...</div>
<div style="position:absolute;left:8px;top:429px;width:77px;height:47px;background:#2e2d33;border:1px solid #3b3a40;border-radius:3px;"></div>
<svg style="left:8px;top:429px" width="77" height="47" viewBox="0 0 77 47"><path d="M12.1,28.6 L21.3,6.5 H60.7" fill="none" stroke="#1e9be6" stroke-width="2.2"/><path d="M21.7,32.3 L26.8,20.2 H60.7" fill="none" stroke="#1e9be6" stroke-width="2.2"/><path d="M8,38.4 H14 Q16,38.4 17,36 L25,12.5 Q26.5,9 28.5,12 C30.5,16 31.5,17.5 34,15.5 C36.5,13 38,13.5 40,15 C42.5,17 44,16.5 46,15.5 C49,14.2 52,15.2 64.3,15.2" fill="none" stroke="#e0803a" stroke-width="1.4"/><circle cx="59.2" cy="32" r="8.4" fill="#2e2d33" stroke="#18c018" stroke-width="1.7"/><path d="M59.2,26.5 V37.5 M53.7,32 H64.7" stroke="#18c018" stroke-width="2"/></svg>
<div class="t" style="top:483.7px;font-size:10.3px;line-height:10.3px;color:#f0f0f0;transform-origin:50% 50%;transform:translateX(-50%) scaleX(1.0);left:46px;">Add Limit Line</div>
<div class="t" style="top:497.7px;font-size:10.3px;line-height:10.3px;color:#f0f0f0;transform-origin:50% 50%;transform:translateX(-50%) scaleX(1.0);left:46px;">Test...</div>
<div style="position:absolute;left:11px;top:923px;width:71px;height:32px;background:#48484c;border:1px solid #55555a;border-radius:3px;"></div>
<div class="t" style="top:932.5px;font-size:14px;line-height:14px;color:#6e6e73;transform-origin:50% 50%;transform:translateX(-50%) scaleX(0.93);left:46.5px;">More (1/1)</div>
<div style="position:absolute;left:3px;top:969px;width:26px;height:31px;background:#17161a;border:1px solid #3a393f;border-radius:9px 2px 2px 12px / 9px 2px 2px 30px;"></div>
<div style="position:absolute;left:3px;top:1002px;width:26px;height:31px;background:#17161a;border:1px solid #3a393f;border-radius:12px 2px 2px 9px / 30px 2px 2px 9px;"></div>
<svg style="left:8px;top:976px" width="16" height="16" viewBox="0 0 16 16"><path d="M13.5,2.5 L2.5,8 L13.5,13.5 Z" fill="none" stroke="#3f3e44" stroke-width="1.2"/></svg>
<svg style="left:5px;top:1008px" width="22" height="12" viewBox="0 0 22 12"><path d="M1,3h5M8,3h5M15,3h5M1,9h5M8,9h5" stroke="#3f3e44" stroke-width="3"/></svg>
<div style="position:absolute;left:31px;top:969px;width:110px;height:64px;background:linear-gradient(#2f2e34 0%,#26252a 49%,#1b1a1e 50%,#1b1a1e 100%);border:1px solid #8a8a8f;border-radius:7px;overflow:hidden;"><div style="position:absolute;right:-1px;bottom:-1px;width:0;height:0;border-left:20px solid transparent;border-bottom:20px solid #5c5c60;"></div></div>
<div style="position:absolute;left:37px;top:975px;width:24px;height:24px;border-radius:50%;background:radial-gradient(circle at 50% 30%,#4a7cff,#1e50e0 60%,#1238b0);"></div>
<div style="position:absolute;left:37px;top:1005px;width:24px;height:24px;border-radius:50%;background:radial-gradient(circle at 50% 30%,#44d044,#1aa81a 60%,#0c800c);"></div>
<div class="t" style="top:982.2px;font-size:10.5px;line-height:10.5px;color:#001040;transform-origin:50% 50%;transform:translateX(-50%) scaleX(0.9);left:49px;">D1A</div>
<div class="t" style="top:1012.2px;font-size:10.5px;line-height:10.5px;color:#003000;transform-origin:50% 50%;transform:translateX(-50%) scaleX(0.9);left:49px;">D1C</div>
<div class="t" style="top:974.6px;font-size:12px;line-height:12px;color:#fff;transform-origin:0 50%;transform:scaleX(0.93);left:65.7px;">28.0 mV/</div>
<div class="t" style="top:989.2px;font-size:12px;line-height:12px;color:#fff;transform-origin:0 50%;transform:scaleX(0.93);left:65.7px;">924.0 mV</div>
<div class="t" style="top:1004.4px;font-size:12px;line-height:12px;color:#fff;transform-origin:0 50%;transform:scaleX(0.93);left:65.7px;">88.0 mV/</div>
<div class="t" style="top:1019.0px;font-size:12px;line-height:12px;color:#fff;transform-origin:0 50%;transform:scaleX(0.93);left:65.7px;">900.2 mV</div>
<div class="t" style="top:1020.2px;font-size:10.5px;line-height:10.5px;color:#111;transform-origin:50% 50%;transform:translateX(-50%) scaleX(1);left:134px;">1</div>
<div style="position:absolute;left:143px;top:969px;width:26px;height:31px;background:#17161a;border:1px solid #3a393f;border-radius:2px 9px 12px 2px / 2px 9px 30px 2px;"></div>
<div style="position:absolute;left:143px;top:1002px;width:26px;height:31px;background:#1d1c20;border:1px solid #6a696f;border-radius:2px 12px 9px 2px / 2px 30px 9px 2px;"></div>
<svg style="left:148px;top:976px" width="16" height="16" viewBox="0 0 16 16"><path d="M2.5,2.5 L13.5,8 L2.5,13.5 Z" fill="none" stroke="#3f3e44" stroke-width="1.2"/></svg>
<svg style="left:143px;top:1002px" width="26" height="31" viewBox="0 0 26 31"><g transform="translate(13,15.5)" fill="#8e8e93"><rect x="-1.93" y="-9.20" width="3.86" height="4.60" rx="0.6" transform="rotate(0.0)"/><rect x="-1.93" y="-9.20" width="3.86" height="4.60" rx="0.6" transform="rotate(45.0)"/><rect x="-1.93" y="-9.20" width="3.86" height="4.60" rx="0.6" transform="rotate(90.0)"/><rect x="-1.93" y="-9.20" width="3.86" height="4.60" rx="0.6" transform="rotate(135.0)"/><rect x="-1.93" y="-9.20" width="3.86" height="4.60" rx="0.6" transform="rotate(180.0)"/><rect x="-1.93" y="-9.20" width="3.86" height="4.60" rx="0.6" transform="rotate(225.0)"/><rect x="-1.93" y="-9.20" width="3.86" height="4.60" rx="0.6" transform="rotate(270.0)"/><rect x="-1.93" y="-9.20" width="3.86" height="4.60" rx="0.6" transform="rotate(315.0)"/><circle r="6.62"/><circle r="3.31" fill="#1d1c20"/></g></svg>
<div style="position:absolute;left:1434px;top:969px;width:90px;height:64px;background:linear-gradient(#2c2b30 0%,#242328 48%,#1c1b1f 50%,#18171b 100%);border:1px solid #58575d;border-radius:6px;"></div>
<div style="position:absolute;left:1526px;top:969px;width:117px;height:64px;background:linear-gradient(#2c2b30 0%,#242328 48%,#1c1b1f 50%,#18171b 100%);border:1px solid #58575d;border-radius:6px;"></div>
<div style="position:absolute;left:1645px;top:969px;width:100px;height:64px;background:linear-gradient(#2c2b30 0%,#242328 48%,#1c1b1f 50%,#18171b 100%);border:1px solid #58575d;border-radius:6px;"></div>
<div style="position:absolute;left:1747px;top:969px;width:56px;height:64px;background:linear-gradient(#222126,#19181c);border:1px solid #47464c;border-radius:6px;"></div>
<div class="t" style="top:974.1px;font-size:12px;line-height:12px;color:#fff;transform-origin:50% 50%;transform:translateX(-50%) scaleX(0.98);left:1479px;font-weight:bold;font-style:italic;">Timebase</div>
<div class="t" style="top:990.0px;font-size:12px;line-height:12px;color:#fff;transform-origin:50% 50%;transform:translateX(-50%) scaleX(0.93);left:1479px;">100.00 ps/</div>
<div class="t" style="left:1479px;top:1005px;font-size:12px;line-height:12px;color:#cfcfcf;transform:translateX(-50%) scaleX(.93);">Pos: <span style="color:#fff">0 s</span></div>
<div class="t" style="top:974.1px;font-size:12px;line-height:12px;color:#fff;transform-origin:50% 50%;transform:translateX(-50%) scaleX(0.98);left:1584.5px;font-weight:bold;font-style:italic;">Acquisition</div>
<div class="t" style="left:1584.5px;top:990px;font-size:12px;line-height:12px;color:#cfcfcf;transform:translateX(-50%) scaleX(.93);">Full Pattern: <span style="color:#9a9a9a">Off</span></div>
<div class="t" style="top:1005.0px;font-size:12px;line-height:12px;color:#bdbdbd;transform-origin:50% 50%;transform:translateX(-50%) scaleX(0.93);left:1584.5px;">400 pts/wfm</div>
<div class="t" style="left:1584.5px;top:1018px;font-size:12px;line-height:12px;color:#cfcfcf;transform:translateX(-50%) scaleX(.93);">Smoothing: <span style="color:#fff">Average</span></div>
<div class="t" style="top:974.1px;font-size:12px;line-height:12px;color:#fff;transform-origin:50% 50%;transform:translateX(-50%) scaleX(0.98);left:1695px;font-weight:bold;font-style:italic;">Frame Trigger</div>
<div class="t" style="left:1695px;top:989px;font-size:12px;line-height:12px;color:#cfcfcf;transform:translateX(-50%) scaleX(.93);">Src: <span style="color:#fff">Front Panel</span></div>
<div class="t" style="top:1004.0px;font-size:12px;line-height:12px;color:#cfcfcf;transform-origin:50% 50%;transform:translateX(-50%) scaleX(0.93);left:1695px;">Clock</div>
<div class="t" style="top:975.2px;font-size:11.5px;line-height:11.5px;color:#5a595f;transform-origin:50% 50%;transform:translateX(-50%) scaleX(0.93);left:1775px;">Pattern</div>
<div class="t" style="top:1016.2px;font-size:11.5px;line-height:11.5px;color:#5a595f;transform-origin:50% 50%;transform:translateX(-50%) scaleX(0.93);left:1775px;">Lock</div>
<svg style="left:1764px;top:989px" width="32" height="26" viewBox="0 0 32 26"><path d="M18,12 V7 a5,5 0 0 1 10,0 V9.5" fill="none" stroke="#6f6e74" stroke-width="1.8"/><path d="M3,11h17M3,15h17M3,19h17M3,23h17" stroke="#5f5e64" stroke-width="2.6"/></svg>
<div style="position:absolute;left:1806px;top:975px;width:52px;height:52px;border-radius:50%;background:linear-gradient(#2c2b30 0%,#232227 49%,#19181c 51%,#151418 100%);border:1px solid #66656b;"></div>
<svg style="left:1823px;top:977.5px" width="18" height="9" viewBox="0 0 18 9"><path d="M0.5,8.5 L9,0.8 L17.5,8.5 Z" fill="#a8a8ac"/></svg>
<div class="t" style="top:995.2px;font-size:12px;line-height:12px;color:#fff;transform-origin:50% 50%;transform:translateX(-50%) scaleX(0.98);left:1832px;font-weight:bold;font-style:italic;">Math</div>
<div style="position:absolute;left:1861px;top:975px;width:52px;height:52px;border-radius:50%;background:linear-gradient(#2c2b30 0%,#232227 49%,#19181c 51%,#151418 100%);border:1px solid #66656b;"></div>
<svg style="left:1878px;top:977.5px" width="18" height="9" viewBox="0 0 18 9"><path d="M0.5,8.5 L9,0.8 L17.5,8.5 Z" fill="#a8a8ac"/></svg>
<div class="t" style="top:995.2px;font-size:12px;line-height:12px;color:#fff;transform-origin:50% 50%;transform:translateX(-50%) scaleX(0.98);left:1887px;font-weight:bold;font-style:italic;">Signals</div>
<svg style="left:1864px;top:938px" width="16" height="16" viewBox="0 0 16 16"><path d="M5,1 H11 V7 H14.5 L8,14.5 L1.5,7 H5 Z" fill="#0c6fe0"/></svg>
<div class="t" style="top:939.0px;font-size:15px;line-height:15px;color:#0c6fe0;transform-origin:0 50%;transform:scaleX(0.93);left:1883px;">D1A</div>
<div style="position:absolute;left:134px;top:77px;width:28px;height:28px;background:radial-gradient(ellipse at 50% 100%,#4a8aa8 0%,#4a6e88 40%,#4f6a82 100%);border:1px solid #1290e0;border-radius:5px;box-shadow:0 0 2px #1290e0;"></div>
<svg style="left:134px;top:77px" width="28" height="28" viewBox="0 0 28 28"><defs><linearGradient id="lg134" x1="0" y1="0" x2="0" y2="1"><stop offset="0" stop-color="#505052"/><stop offset="1" stop-color="#2e2e30"/></linearGradient></defs><rect x="4.5" y="4.5" width="19" height="19" rx="2" fill="#5a7890" stroke="#7d98ac" stroke-width="1"/></svg>
<div style="position:absolute;left:166px;top:77px;width:28px;height:28px;background:#333336;border:1px solid #2a2a2c;border-radius:5px;"></div>
<svg style="left:166px;top:77px" width="28" height="28" viewBox="0 0 28 28"><defs><linearGradient id="lg166" x1="0" y1="0" x2="0" y2="1"><stop offset="0" stop-color="#505052"/><stop offset="1" stop-color="#2e2e30"/></linearGradient></defs><g fill="url(#lg166)" stroke="#8a8a8c" stroke-width="0.9"><rect x="3.5" y="3.5" width="9.5" height="9.5"/><rect x="15.5" y="3.5" width="9.5" height="9.5"/><rect x="3.5" y="15.5" width="9.5" height="9.5"/><rect x="15.5" y="15.5" width="9.5" height="9.5"/></g></svg>
<div style="position:absolute;left:198px;top:77px;width:28px;height:28px;background:#333336;border:1px solid #2a2a2c;border-radius:5px;"></div>
<svg style="left:198px;top:77px" width="28" height="28" viewBox="0 0 28 28"><defs><linearGradient id="lg198" x1="0" y1="0" x2="0" y2="1"><stop offset="0" stop-color="#505052"/><stop offset="1" stop-color="#2e2e30"/></linearGradient></defs><g fill="url(#lg198)" stroke="#8a8a8c" stroke-width="0.9"><rect x="3.5" y="3.5" width="21.5" height="5.5"/><rect x="3.5" y="11.5" width="21.5" height="5.5"/><rect x="3.5" y="19.5" width="21.5" height="5.5"/></g></svg>
<div style="position:absolute;left:230px;top:77px;width:28px;height:28px;background:#333336;border:1px solid #2a2a2c;border-radius:5px;"></div>
<svg style="left:230px;top:77px" width="28" height="28" viewBox="0 0 28 28"><defs><linearGradient id="lg230" x1="0" y1="0" x2="0" y2="1"><stop offset="0" stop-color="#505052"/><stop offset="1" stop-color="#2e2e30"/></linearGradient></defs><g fill="url(#lg230)" stroke="#8a8a8c" stroke-width="0.9"><rect x="3.5" y="3.5" width="21.5" height="13.5"/><rect x="3.5" y="19.5" width="5.5" height="5.5"/><rect x="11.5" y="19.5" width="5.5" height="5.5"/></g></svg>
<div style="position:absolute;left:1812px;top:77px;width:54px;height:28px;background:#29282d;border-radius:3px;"></div>
<div style="position:absolute;left:1849px;top:78px;width:1px;height:26px;background:#3c3b41;"></div>
<svg style="left:1818px;top:79px" width="24" height="24" viewBox="0 0 24 24"><g fill="#3a393f" stroke="#d0d0d0" stroke-width="0.9" stroke-linejoin="miter"><path d="M12,2.2 L15.2,6 H13.4 V10.6 H18 V8.8 L21.8,12 L18,15.2 V13.4 H13.4 V18 H15.2 L12,21.8 L8.8,18 H10.6 V13.4 H6 V15.2 L2.2,12 L6,8.8 V10.6 H10.6 V6 H8.8 Z"/></g></svg>
<svg style="left:1852px;top:86px" width="10" height="10" viewBox="0 0 10 10"><path d="M1,1 H9 L5,9 Z" fill="#d8d8d8"/></svg>
<div style="position:absolute;left:1881px;top:77px;width:27px;height:28px;background:#29282d;border-radius:3px;"></div>
<svg style="left:1881px;top:77px" width="27" height="28" viewBox="0 0 27 28"><path d="M6,8 H21.5 M6,13.5 H21.5 M6,19 H21.5" stroke="#9c9c9c" stroke-width="2.7" stroke-linecap="round"/></svg>
<div style="position:absolute;left:1765px;top:135.3px;width:90px;height:51.69999999999999px;background:#000;border:1px solid #8e8e8e;"></div>
<div class="t" style="top:141.8px;font-size:12.5px;line-height:12.5px;color:#fff;transform-origin:0 50%;transform:scaleX(0.88);left:1769.5px;">Signals</div>
<svg style="left:1836px;top:141px" width="13" height="12" viewBox="0 0 13 12"><path d="M1.5,6 L6.5,1.5 L11.5,6 M1.5,10.5 L6.5,6 L11.5,10.5" fill="none" stroke="#b0b0b0" stroke-width="1.1"/></svg>
<div class="t" style="top:159.5px;font-size:12px;line-height:12px;color:#fff;transform-origin:0 50%;transform:scaleX(0.89);left:1769.5px;">Port 1</div>
<div class="t" style="top:173.5px;font-size:12px;line-height:12px;color:#fff;transform-origin:0 50%;transform:scaleX(0.89);left:1769.5px;">Port 2</div>
<div style="position:absolute;left:1810px;top:162px;width:40px;height:5px;background:#10c010;border:1px solid #c8c8c8;"></div>
<div style="position:absolute;left:1810px;top:176px;width:40px;height:5px;background:#0c50f0;border:1px solid #c8c8c8;"></div>
<div style="position:absolute;left:245px;top:94px;width:968px;height:697px;background:linear-gradient(150deg,#1d1c21 0%,#1b1a1f 25%,#111114 60%,#09090b 100%);border:2px solid #8a8a8a;border-radius:6px 6px 0 0;"></div>
<div style="position:absolute;left:247px;top:96px;width:964px;height:35px;background:linear-gradient(90deg,#232228,#1f1e23);border-radius:4px 4px 0 0;"></div>
<div class="t" style="top:105.5px;font-size:15px;line-height:15px;color:#fff;transform-origin:0 50%;transform:scaleX(0.89);left:250.7px;">TDR Setup</div>
<div style="position:absolute;left:1093px;top:100px;width:30px;height:26px;background:linear-gradient(#3a393f,#2c2b31);border:1px solid #66656b;border-radius:3px;"></div>
<div style="position:absolute;left:1100px;top:108px;width:16px;height:4px;background:#8a8a8f;"></div>
<div style="position:absolute;left:1127px;top:100px;width:30px;height:26px;background:linear-gradient(#2b84d6,#1a5a9e);border:1px solid #6a9ccc;border-radius:3px;"></div>
<div class="t" style="top:105.5px;font-size:16px;line-height:16px;color:#fff;transform-origin:50% 50%;transform:translateX(-50%) scaleX(1);left:1142px;font-weight:bold;">?</div>
<div style="position:absolute;left:1161px;top:100px;width:44px;height:26px;background:linear-gradient(#2c8c2c,#1c6c1c);border:1px solid #4a9a4a;border-radius:3px;"></div>
<div class="t" style="top:105.3px;font-size:16px;line-height:16px;color:#f4f4f4;transform-origin:50% 50%;transform:translateX(-50%) scaleX(0.83);left:1183px;font-weight:bold;">Close</div>
<div class="t" style="top:153.2px;font-size:15.5px;line-height:15.5px;color:#fff;transform-origin:0 50%;transform:scaleX(0.885);left:256px;">TDR Stimulus Mode:</div>
<div style="position:absolute;left:389px;top:143.5px;width:114px;height:34.0px;background:#1b1a1f;border:1px solid #6a696f;border-radius:4px;"></div>
<div style="position:absolute;left:509px;top:143.5px;width:102px;height:34.0px;background:#1b1a1f;border:1px solid #77767c;border-radius:4px;"></div>
<div style="position:absolute;left:394px;top:152px;width:18px;height:18px;border-radius:50%;background:#fff;border:1px solid #b8b8b8;"></div>
<div style="position:absolute;left:514px;top:152px;width:18px;height:18px;border-radius:50%;background:#fff;border:1px solid #b8b8b8;"></div>
<div style="position:absolute;left:517px;top:155px;width:12px;height:12px;border-radius:50%;background:radial-gradient(circle at 50% 35%,#3ab03a,#0d6d0d);border:1px solid #0a4a0a;"></div>
<div class="t" style="top:153.2px;font-size:15.5px;line-height:15.5px;color:#fff;transform-origin:0 50%;transform:scaleX(0.875);left:417.5px;">Single Ended</div>
<div class="t" style="top:153.2px;font-size:15.5px;line-height:15.5px;color:#fff;transform-origin:0 50%;transform:scaleX(0.885);left:538px;">Differential</div>
<div class="btn" style="position:absolute;left:1114px;top:144px;width:88px;height:32px;"></div>
<svg style="left:1117px;top:150px" width="20" height="20" viewBox="0 0 20 20"><circle cx="11" cy="10" r="9.1" fill="none" stroke="#14c014" stroke-width="1.9"/><path d="M11,4.6 V15.4 M5.6,10 H16.4" stroke="#14c014" stroke-width="2.6"/></svg>
<div class="t" style="top:152.7px;font-size:15px;line-height:15px;color:#fff;transform-origin:0 50%;transform:scaleX(0.9);left:1143px;">Add DUT</div>
<div style="position:absolute;left:251px;top:214px;width:957px;height:571.5px;background:linear-gradient(90deg,#1b1a1f 0%,#1a191e 40%,#131216 100%);border:1px solid #8a8a8a;border-radius:0 0 6px 6px;"></div>
<div style="position:absolute;left:251px;top:186px;width:69px;height:30px;background:#1b1a1f;border:1px solid #8a8a8a;border-bottom:0;border-radius:5px 5px 0 0;"></div>
<div class="t" style="top:193.8px;font-size:14.5px;line-height:14.5px;color:#fff;transform-origin:0 50%;transform:scaleX(0.93);left:266px;">DUT 1</div>
<div style="position:absolute;left:258px;top:221px;width:227px;height:557px;background:#1c1b20;border:1px solid #77767c;border-radius:5px;"></div>
<div class="t" style="top:230.8px;font-size:14.5px;line-height:14.5px;color:#fff;transform-origin:0 50%;transform:scaleX(1.01);left:266px;font-weight:bold;">Fixture Components</div>
<div class="t" style="top:246.5px;font-size:13px;line-height:13px;color:#fff;transform-origin:0 50%;transform:scaleX(0.935);left:266px;">(click to select):</div>
<div style="position:absolute;left:262.5px;top:266.8px;width:39.0px;height:38.39999999999998px;border:1px solid #1a80d0;border-radius:4px;"></div>
<div style="position:absolute;left:265px;top:269px;width:34px;height:34px;background:#1c1b20;border:1px solid #8a898f;border-radius:3px;"></div>
<div class="t" style="top:275.0px;font-size:24px;line-height:24px;color:#fff;transform-origin:50% 50%;transform:translateX(-50%) scaleX(1.0);left:282px;font-weight:bold;">A</div>
<div style="position:absolute;left:304px;top:268px;width:36px;height:36px;background:#1c1b20;border:1px solid #5a595f;border-radius:3px;"></div>
<svg style="left:306px;top:270px" width="32" height="32" viewBox="0 0 32 32"><circle cx="16" cy="16" r="13.6" fill="none" stroke="#14b814" stroke-width="2.4"/><path d="M16,8 V24 M8,16 H24" stroke="#14b814" stroke-width="3.2"/></svg>
<div style="position:absolute;left:265px;top:310px;width:212px;height:463px;background:#1c1b20;border:1px solid #1a7fd0;border-radius:4px;"></div>
<div style="position:absolute;left:266px;top:311px;width:40px;height:39px;background:#1c1b20;border:1px solid #1a7fd0;border-radius:4px;"></div>
<div class="t" style="top:319.0px;font-size:24px;line-height:24px;color:#fff;transform-origin:50% 50%;transform:translateX(-50%) scaleX(1.0);left:285.5px;font-weight:bold;">A</div>
<div class="t" style="top:313.1px;font-size:15px;line-height:15px;color:#fff;transform-origin:0 50%;transform:scaleX(0.92);left:310px;">SParameter_2015-01-...</div>
<div class="t" style="top:334.0px;font-size:12px;line-height:12px;color:#fff;transform-origin:0 50%;transform:scaleX(0.92);left:310px;">4-Port Touchstone Files (s4p)</div>
<svg style="left:0;top:0" width="1917" height="1037" viewBox="0 0 1917 1037" font-family="Liberation Sans, sans-serif"><rect x="331" y="365" width="80" height="163.5" rx="3" fill="#5b80bf"/><rect x="310.5" y="394.7" width="121" height="16.6" fill="#5b80bf"/><text x="337" y="408.3" font-size="13.5" font-weight="bold" fill="#111" text-anchor="middle">1</text><text x="405.5" y="408.3" font-size="13.5" font-weight="bold" fill="#111" text-anchor="middle">2</text><rect x="310.5" y="480.7" width="121" height="16.6" fill="#5b80bf"/><text x="337" y="494.3" font-size="13.5" font-weight="bold" fill="#111" text-anchor="middle">3</text><text x="405.5" y="494.3" font-size="13.5" font-weight="bold" fill="#111" text-anchor="middle">4</text><text x="371" y="453.3" font-size="19" font-weight="bold" fill="#1d5a87" text-anchor="middle">A</text><g transform="translate(371,513.5)" fill="#6a6a6a"><rect x="-2.42" y="-11.50" width="4.83" height="5.75" rx="0.6" transform="rotate(0.0)"/><rect x="-2.42" y="-11.50" width="4.83" height="5.75" rx="0.6" transform="rotate(45.0)"/><rect x="-2.42" y="-11.50" width="4.83" height="5.75" rx="0.6" transform="rotate(90.0)"/><rect x="-2.42" y="-11.50" width="4.83" height="5.75" rx="0.6" transform="rotate(135.0)"/><rect x="-2.42" y="-11.50" width="4.83" height="5.75" rx="0.6" transform="rotate(180.0)"/><rect x="-2.42" y="-11.50" width="4.83" height="5.75" rx="0.6" transform="rotate(225.0)"/><rect x="-2.42" y="-11.50" width="4.83" height="5.75" rx="0.6" transform="rotate(270.0)"/><rect x="-2.42" y="-11.50" width="4.83" height="5.75" rx="0.6" transform="rotate(315.0)"/><circle r="8.28"/><circle r="4.60" fill="#5b80bf"/></g><rect x="331" y="546" width="80" height="79" rx="3" fill="#5b80bf"/><rect x="310.5" y="577.7" width="121" height="16.6" fill="#5b80bf"/><text x="337" y="591.3" font-size="13.5" font-weight="bold" fill="#111" text-anchor="middle">1</text><text x="405.5" y="591.3" font-size="13.5" font-weight="bold" fill="#111" text-anchor="middle">2</text><text x="371" y="593" font-size="19" font-weight="bold" fill="#1d5a87" text-anchor="middle">A</text><g transform="translate(371,609.5)" fill="#6a6a6a"><rect x="-2.42" y="-11.50" width="4.83" height="5.75" rx="0.6" transform="rotate(0.0)"/><rect x="-2.42" y="-11.50" width="4.83" height="5.75" rx="0.6" transform="rotate(45.0)"/><rect x="-2.42" y="-11.50" width="4.83" height="5.75" rx="0.6" transform="rotate(90.0)"/><rect x="-2.42" y="-11.50" width="4.83" height="5.75" rx="0.6" transform="rotate(135.0)"/><rect x="-2.42" y="-11.50" width="4.83" height="5.75" rx="0.6" transform="rotate(180.0)"/><rect x="-2.42" y="-11.50" width="4.83" height="5.75" rx="0.6" transform="rotate(225.0)"/><rect x="-2.42" y="-11.50" width="4.83" height="5.75" rx="0.6" transform="rotate(270.0)"/><rect x="-2.42" y="-11.50" width="4.83" height="5.75" rx="0.6" transform="rotate(315.0)"/><circle r="8.28"/><circle r="4.60" fill="#5b80bf"/></g><rect x="331" y="642" width="80" height="79" rx="3" fill="#5b80bf"/><rect x="310.5" y="673.7" width="121" height="16.6" fill="#5b80bf"/><text x="337" y="687.3" font-size="13.5" font-weight="bold" fill="#111" text-anchor="middle">3</text><text x="405.5" y="687.3" font-size="13.5" font-weight="bold" fill="#111" text-anchor="middle">4</text><text x="371" y="689" font-size="19" font-weight="bold" fill="#1d5a87" text-anchor="middle">A</text><g transform="translate(371,705)" fill="#6a6a6a"><rect x="-2.42" y="-11.50" width="4.83" height="5.75" rx="0.6" transform="rotate(0.0)"/><rect x="-2.42" y="-11.50" width="4.83" height="5.75" rx="0.6" transform="rotate(45.0)"/><rect x="-2.42" y="-11.50" width="4.83" height="5.75" rx="0.6" transform="rotate(90.0)"/><rect x="-2.42" y="-11.50" width="4.83" height="5.75" rx="0.6" transform="rotate(135.0)"/><rect x="-2.42" y="-11.50" width="4.83" height="5.75" rx="0.6" transform="rotate(180.0)"/><rect x="-2.42" y="-11.50" width="4.83" height="5.75" rx="0.6" transform="rotate(225.0)"/><rect x="-2.42" y="-11.50" width="4.83" height="5.75" rx="0.6" transform="rotate(270.0)"/><rect x="-2.42" y="-11.50" width="4.83" height="5.75" rx="0.6" transform="rotate(315.0)"/><circle r="8.28"/><circle r="4.60" fill="#5b80bf"/></g></svg>
<div class="btn" style="position:absolute;left:272px;top:740px;width:27px;height:25.5px;"></div>
<svg style="left:276px;top:744px" width="18" height="18" viewBox="0 0 18 18"><path d="M15.6,1.6 L3.6,15.6" fill="none" stroke="#f01010" stroke-width="3.2" stroke-linecap="butt"/><path d="M7,3.2 L13.4,14.6" fill="none" stroke="#f01010" stroke-width="2.4" stroke-linecap="round"/></svg>
<div class="btn" style="position:absolute;left:409px;top:740px;width:62.5px;height:25.5px;"></div>
<div class="t" style="top:744.8px;font-size:15px;line-height:15px;color:#fff;transform-origin:50% 50%;transform:translateX(-50%) scaleX(0.95);left:439.8px;">Details...</div>
<div style="position:absolute;left:489px;top:222px;width:581px;height:555.5px;background:#fff;border:1px solid #c8c8c8;border-radius:4px;"></div>
<div style="position:absolute;left:491px;top:224px;width:576px;height:29px;background:#66af5f;"></div>
<div class="t" style="top:230.5px;font-size:17px;line-height:17px;color:#000;transform-origin:50% 50%;transform:translateX(-50%) scaleX(0.99);left:779px;font-weight:bold;">Fixture De-embedding Setup</div>
<div class="t" style="top:264.0px;font-size:12px;line-height:12px;color:#888;transform-origin:50% 50%;transform:translateX(-50%) scaleX(0.924);left:780px;font-style:italic;">Drag-and-drop the desired fixture components to de-embed DUT-to-fixture paths</div>
<div style="position:absolute;left:529px;top:359px;width:20px;height:24px;background:linear-gradient(#8a7200,#c2a400 28%,#b89a00 50%,#856c00 85%,#6e5a00);border-radius:2px;"></div>
<div style="position:absolute;left:1009px;top:359px;width:20px;height:24px;background:linear-gradient(#8a7200,#c2a400 28%,#b89a00 50%,#856c00 85%,#6e5a00);border-radius:2px;"></div>
<div style="position:absolute;left:529px;top:445px;width:20px;height:24px;background:linear-gradient(#8a7200,#c2a400 28%,#b89a00 50%,#856c00 85%,#6e5a00);border-radius:2px;"></div>
<div style="position:absolute;left:1009px;top:445px;width:20px;height:24px;background:linear-gradient(#8a7200,#c2a400 28%,#b89a00 50%,#856c00 85%,#6e5a00);border-radius:2px;"></div>
<div style="position:absolute;left:547px;top:292px;width:464px;height:243px;background:#66af5f;border:1px solid #4a5a48;border-radius:10px;box-shadow:0 1px 2px rgba(0,0,0,.35);"></div>
<div class="t" style="top:301.8px;font-size:20.5px;line-height:20.5px;color:#666;transform-origin:50% 50%;transform:translateX(-50%) scaleX(0.99);left:779px;font-weight:bold;">Fixture</div>
<div style="position:absolute;left:548px;top:363px;width:119px;height:16px;background:#5b80bf;"></div>
<div style="position:absolute;left:890px;top:363px;width:121px;height:16px;background:#5b80bf;"></div>
<div style="position:absolute;left:667px;top:358.5px;width:23px;height:25.0px;background:linear-gradient(#8c8c8c,#c4c4c4 32%,#b6b6b6 55%,#808080);border-radius:2px;"></div>
<div style="position:absolute;left:869px;top:358.5px;width:22px;height:25.0px;background:linear-gradient(#8c8c8c,#c4c4c4 32%,#b6b6b6 55%,#808080);border-radius:2px;"></div>
<div style="position:absolute;left:548px;top:449px;width:119px;height:16px;background:#5b80bf;"></div>
<div style="position:absolute;left:890px;top:449px;width:121px;height:16px;background:#5b80bf;"></div>
<div style="position:absolute;left:667px;top:444.5px;width:23px;height:25.0px;background:linear-gradient(#8c8c8c,#c4c4c4 32%,#b6b6b6 55%,#808080);border-radius:2px;"></div>
<div style="position:absolute;left:869px;top:444.5px;width:22px;height:25.0px;background:linear-gradient(#8c8c8c,#c4c4c4 32%,#b6b6b6 55%,#808080);border-radius:2px;"></div>
<div style="position:absolute;left:567px;top:332px;width:80px;height:164px;background:#5b80bf;border-radius:3px;box-shadow:0 1px 2px rgba(0,0,0,.4);"></div>
<div style="position:absolute;left:911px;top:332px;width:80.5px;height:164px;background:#5b80bf;border-radius:3px;box-shadow:0 1px 2px rgba(0,0,0,.4);"></div>
<div style="position:absolute;left:689px;top:328px;width:181px;height:172px;background:linear-gradient(90deg,#8e8e8e 0%,#d2d2d2 6%,#e6e6e6 18%,#d8d8d8 38%,#cfcfcf 50%,#e2e2e2 70%,#dcdcdc 88%,#c4c4c4 95%,#8a8a8a 100%);border-radius:9px;border:1px solid #8e8e8e;box-shadow:0 1px 3px rgba(0,0,0,.55);"></div>
<div class="t" style="top:402.0px;font-size:25px;line-height:25px;color:#787878;transform-origin:50% 50%;transform:translateX(-50%) scaleX(1.0);left:779px;font-weight:bold;">DUT 1</div>
<div class="t" style="top:364.5px;font-size:14px;line-height:14px;color:#111;transform-origin:50% 50%;transform:translateX(-50%) scaleX(1.0);left:572.5px;font-weight:bold;">1</div>
<div class="t" style="top:364.5px;font-size:14px;line-height:14px;color:#111;transform-origin:50% 50%;transform:translateX(-50%) scaleX(1.0);left:641.5px;font-weight:bold;">2</div>
<div class="t" style="top:364.5px;font-size:14px;line-height:14px;color:#111;transform-origin:50% 50%;transform:translateX(-50%) scaleX(1.0);left:916.5px;font-weight:bold;">2</div>
<div class="t" style="top:364.5px;font-size:14px;line-height:14px;color:#111;transform-origin:50% 50%;transform:translateX(-50%) scaleX(1.0);left:985.5px;font-weight:bold;">1</div>
<div class="t" style="top:450.5px;font-size:14px;line-height:14px;color:#111;transform-origin:50% 50%;transform:translateX(-50%) scaleX(1.0);left:572.5px;font-weight:bold;">3</div>
<div class="t" style="top:450.5px;font-size:14px;line-height:14px;color:#111;transform-origin:50% 50%;transform:translateX(-50%) scaleX(1.0);left:641.5px;font-weight:bold;">4</div>
<div class="t" style="top:450.5px;font-size:14px;line-height:14px;color:#111;transform-origin:50% 50%;transform:translateX(-50%) scaleX(1.0);left:916.5px;font-weight:bold;">4</div>
<div class="t" style="top:450.5px;font-size:14px;line-height:14px;color:#111;transform-origin:50% 50%;transform:translateX(-50%) scaleX(1.0);left:985.5px;font-weight:bold;">3</div>
<div class="t" style="top:363.0px;font-size:16px;line-height:16px;color:#000;transform-origin:50% 50%;transform:translateX(-50%) scaleX(1.0);left:517px;font-weight:bold;">+</div>
<div class="t" style="top:363.0px;font-size:16px;line-height:16px;color:#000;transform-origin:50% 50%;transform:translateX(-50%) scaleX(1.0);left:700.5px;font-weight:bold;">+</div>
<div class="t" style="top:363.0px;font-size:16px;line-height:16px;color:#000;transform-origin:50% 50%;transform:translateX(-50%) scaleX(1.0);left:857px;font-weight:bold;">+</div>
<div class="t" style="top:363.0px;font-size:16px;line-height:16px;color:#000;transform-origin:50% 50%;transform:translateX(-50%) scaleX(1.0);left:1040.5px;font-weight:bold;">+</div>
<div class="t" style="top:406.0px;font-size:17px;line-height:17px;color:#000;transform-origin:50% 50%;transform:translateX(-50%) scaleX(1.0);left:517px;font-weight:bold;">1</div>
<div class="t" style="top:406.0px;font-size:17px;line-height:17px;color:#000;transform-origin:50% 50%;transform:translateX(-50%) scaleX(1.0);left:699px;font-weight:bold;">1</div>
<div class="t" style="top:406.0px;font-size:17px;line-height:17px;color:#000;transform-origin:50% 50%;transform:translateX(-50%) scaleX(1.0);left:859px;font-weight:bold;">2</div>
<div class="t" style="top:406.0px;font-size:17px;line-height:17px;color:#000;transform-origin:50% 50%;transform:translateX(-50%) scaleX(1.0);left:1040.5px;font-weight:bold;">2</div>
<div class="t" style="top:448.0px;font-size:16px;line-height:16px;color:#000;transform-origin:50% 50%;transform:translateX(-50%) scaleX(1.0);left:517px;font-weight:bold;">-</div>
<div class="t" style="top:448.0px;font-size:16px;line-height:16px;color:#000;transform-origin:50% 50%;transform:translateX(-50%) scaleX(1.0);left:697px;font-weight:bold;">-</div>
<div class="t" style="top:448.0px;font-size:16px;line-height:16px;color:#000;transform-origin:50% 50%;transform:translateX(-50%) scaleX(1.0);left:860px;font-weight:bold;">-</div>
<div class="t" style="top:448.0px;font-size:16px;line-height:16px;color:#000;transform-origin:50% 50%;transform:translateX(-50%) scaleX(1.0);left:1040.5px;font-weight:bold;">-</div>
<div class="t" style="top:404.5px;font-size:20px;line-height:20px;color:#1d5a87;transform-origin:50% 50%;transform:translateX(-50%) scaleX(1.0);left:607px;font-weight:bold;">A</div>
<div class="t" style="top:404.5px;font-size:20px;line-height:20px;color:#1d5a87;transform-origin:50% 50%;transform:translateX(-50%) scaleX(1.0);left:951px;font-weight:bold;">A</div>
<svg style="left:0;top:0" width="1917" height="1037" viewBox="0 0 1917 1037"><g transform="translate(607.3,480.5)" fill="#6a6a6a"><rect x="-2.42" y="-11.50" width="4.83" height="5.75" rx="0.6" transform="rotate(0.0)"/><rect x="-2.42" y="-11.50" width="4.83" height="5.75" rx="0.6" transform="rotate(45.0)"/><rect x="-2.42" y="-11.50" width="4.83" height="5.75" rx="0.6" transform="rotate(90.0)"/><rect x="-2.42" y="-11.50" width="4.83" height="5.75" rx="0.6" transform="rotate(135.0)"/><rect x="-2.42" y="-11.50" width="4.83" height="5.75" rx="0.6" transform="rotate(180.0)"/><rect x="-2.42" y="-11.50" width="4.83" height="5.75" rx="0.6" transform="rotate(225.0)"/><rect x="-2.42" y="-11.50" width="4.83" height="5.75" rx="0.6" transform="rotate(270.0)"/><rect x="-2.42" y="-11.50" width="4.83" height="5.75" rx="0.6" transform="rotate(315.0)"/><circle r="8.28"/><circle r="4.60" fill="#5b80bf"/></g><g transform="translate(951.3,480.5)" fill="#6a6a6a"><rect x="-2.42" y="-11.50" width="4.83" height="5.75" rx="0.6" transform="rotate(0.0)"/><rect x="-2.42" y="-11.50" width="4.83" height="5.75" rx="0.6" transform="rotate(45.0)"/><rect x="-2.42" y="-11.50" width="4.83" height="5.75" rx="0.6" transform="rotate(90.0)"/><rect x="-2.42" y="-11.50" width="4.83" height="5.75" rx="0.6" transform="rotate(135.0)"/><rect x="-2.42" y="-11.50" width="4.83" height="5.75" rx="0.6" transform="rotate(180.0)"/><rect x="-2.42" y="-11.50" width="4.83" height="5.75" rx="0.6" transform="rotate(225.0)"/><rect x="-2.42" y="-11.50" width="4.83" height="5.75" rx="0.6" transform="rotate(270.0)"/><rect x="-2.42" y="-11.50" width="4.83" height="5.75" rx="0.6" transform="rotate(315.0)"/><circle r="8.28"/><circle r="4.60" fill="#5b80bf"/></g></svg>
<div style="position:absolute;left:1074px;top:221px;width:126px;height:557px;background:#1c1b20;border:1px solid #77767c;border-radius:5px;"></div>
<div class="btn" style="position:absolute;left:1081px;top:228px;width:111px;height:33px;"></div>
<svg style="left:1091px;top:233px" width="28" height="24" viewBox="0 0 28 24"><path d="M1.5,12 L12,1.5 V6.5 H26.5 V17.5 H12 V22.5 Z" fill="#5fae55"/></svg>
<div class="t" style="top:231.8px;font-size:12.5px;line-height:12.5px;color:#fff;transform-origin:0 50%;transform:scaleX(0.93);left:1122px;">Back to</div>
<div class="t" style="top:245.8px;font-size:12.5px;line-height:12.5px;color:#fff;transform-origin:0 50%;transform:scaleX(0.93);left:1122px;">DUT layout</div>
<div class="btn" style="position:absolute;left:1081px;top:270px;width:111px;height:40px;"></div>
<svg style="left:1090px;top:278px" width="28" height="24" viewBox="0 0 28 24"><path d="M2,8.3 H6 M2,15 H6 M24.5,8.3 H28 M24.5,15 H28" stroke="#c8a800" stroke-width="2.2"/><rect x="5.3" y="2.8" width="19.7" height="17.8" rx="2.5" fill="#66af5f"/><rect x="10" y="3.8" width="10.5" height="15.8" rx="1" fill="#dcdcdc"/><path d="M7,8.3h3M7,15h3M20.5,8.3h3M20.5,15h3" stroke="#9a9a9a" stroke-width="1.8"/></svg>
<div class="t" style="top:276.8px;font-size:12.5px;line-height:12.5px;color:#fff;transform-origin:0 50%;transform:scaleX(0.93);left:1120px;">Launch</div>
<div class="t" style="top:291.2px;font-size:12.5px;line-height:12.5px;color:#fff;transform-origin:0 50%;transform:scaleX(0.93);left:1120px;">AFR Wizard</div>
<div style="position:absolute;left:1080px;top:318px;width:114px;height:49px;background:#19181c;border:1px solid #4a494f;border-radius:3px;"></div>
<div style="position:absolute;left:1084px;top:334px;width:18px;height:18px;background:#e6e6e6;border-radius:2px;"></div>
<div class="t" style="top:322.2px;font-size:12.5px;line-height:12.5px;color:#55545a;transform-origin:0 50%;transform:scaleX(0.93);left:1108px;">Apply</div>
<div class="t" style="top:336.6px;font-size:12.5px;line-height:12.5px;color:#55545a;transform-origin:0 50%;transform:scaleX(0.93);left:1108px;">Fixture</div>
<div class="t" style="top:350.9px;font-size:12.5px;line-height:12.5px;color:#55545a;transform-origin:0 50%;transform:scaleX(0.93);left:1108px;">De-embed</div>
<div class="t" style="top:370.7px;font-size:13px;line-height:13px;color:#fff;transform-origin:50% 50%;transform:translateX(-50%) scaleX(0.93);left:1137.5px;font-style:italic;">A valid TDR calibration</div>
<div class="t" style="top:385.2px;font-size:13px;line-height:13px;color:#fff;transform-origin:50% 50%;transform:translateX(-50%) scaleX(0.93);left:1137.5px;font-style:italic;">is required to enable</div>
<div class="t" style="top:399.7px;font-size:13px;line-height:13px;color:#fff;transform-origin:50% 50%;transform:translateX(-50%) scaleX(0.93);left:1137.5px;font-style:italic;">De-embedding.</div>
<div class="btn" style="position:absolute;left:1081px;top:733px;width:111px;height:37px;"></div>
<svg style="left:1092px;top:745px" width="20" height="17" viewBox="0 0 20 17"><path d="M1.5,2.5 L18.5,15 M17.5,1.5 L2,15.5" stroke="#e01010" stroke-width="1.5"/></svg>
<div class="t" style="top:738.8px;font-size:12.5px;line-height:12.5px;color:#fff;transform-origin:0 50%;transform:scaleX(0.93);left:1115px;">Remove All</div>
<div class="t" style="top:753.2px;font-size:12.5px;line-height:12.5px;color:#fff;transform-origin:0 50%;transform:scaleX(0.93);left:1115px;">Components</div>
<div style="position:absolute;left:725.5px;top:467.5px;width:212.29999999999995px;height:129.0px;background:#1b1a1f;border:1px solid #0c0c0e;border-radius:7px;"></div>
<div class="t" style="top:476.7px;font-size:15px;line-height:15px;color:#fff;transform-origin:0 50%;transform:scaleX(0.915);left:736px;">Fixture Component Setup</div>
<div style="position:absolute;left:905px;top:472.5px;width:26px;height:23.5px;background:linear-gradient(#a82020,#600808);border:1px solid #c07070;border-radius:3px;"></div>
<div class="t" style="top:477.0px;font-size:15px;line-height:15px;color:#fff;transform-origin:50% 50%;transform:translateX(-50%) scaleX(1.2);left:918px;font-weight:bold;">X</div>
<div style="position:absolute;left:737px;top:505px;width:189px;height:35px;background:linear-gradient(#17161a,#0c0c0e);border:1px solid #66656b;border-radius:3px;"></div>
<div style="position:absolute;left:737px;top:550px;width:189px;height:35px;background:linear-gradient(#17161a,#0c0c0e);border:1px solid #66656b;border-radius:3px;"></div>
<div style="position:absolute;left:741px;top:514px;width:18px;height:18px;background:#fff;border:1px solid #bdbdbd;border-radius:2px;"></div>
<svg style="left:741px;top:514px" width="18" height="18" viewBox="0 0 18 18"><path d="M3,8.8 L7,13.2 L15.2,2.8" fill="none" stroke="#128a12" stroke-width="1.9"/></svg>
<div style="position:absolute;left:741px;top:559px;width:18px;height:18px;background:#fff;border:1px solid #bdbdbd;border-radius:2px;"></div>
<div class="t" style="top:514.7px;font-size:15px;line-height:15px;color:#fff;transform-origin:0 50%;transform:scaleX(0.915);left:765px;">Reverse</div>
<div class="t" style="top:559.7px;font-size:15px;line-height:15px;color:#fff;transform-origin:0 50%;transform:scaleX(0.915);left:765px;">Flip Vertically</div>
</body></html>
